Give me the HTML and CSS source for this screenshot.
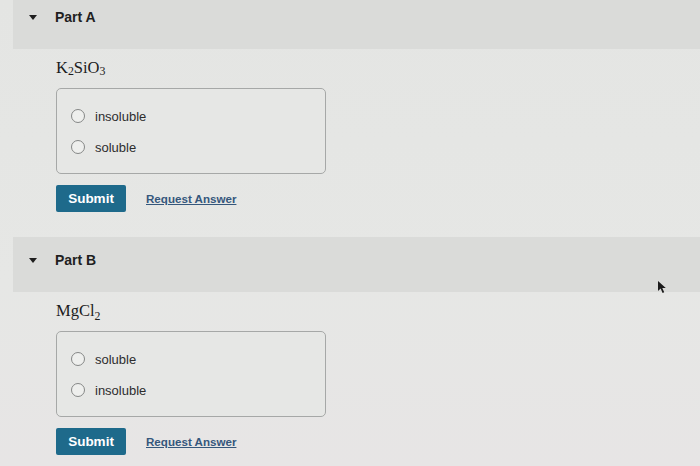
FILE: index.html
```html
<!DOCTYPE html>
<html>
<head>
    <title>Solubility Parts</title>
    <link rel="stylesheet" href="styles.css">
</head>
<body>
    <div class="parts">
        <section class="part">
            <div class="part-head">
                <span class="caret"></span>
                <span class="part-title">Part A</span>
            </div>
            <div class="part-body">
                <div class="formula">K<sub>2</sub>SiO<sub>3</sub></div>
                <div class="choices">
                    <label class="choice"><span class="radio"></span>insoluble</label>
                    <label class="choice"><span class="radio"></span>soluble</label>
                </div>
                <div class="actions">
                    <button class="submit">Submit</button>
                    <a href="#" class="request">Request Answer</a>
                </div>
            </div>
        </section>

        <section class="part">
            <div class="part-head">
                <span class="caret"></span>
                <span class="part-title">Part B</span>
            </div>
            <div class="part-body">
                <div class="formula">MgCl<sub class="low">2</sub></div>
                <div class="choices">
                    <label class="choice"><span class="radio"></span>soluble</label>
                    <label class="choice"><span class="radio"></span>insoluble</label>
                </div>
                <div class="actions">
                    <button class="submit">Submit</button>
                    <a href="#" class="request">Request Answer</a>
                </div>
            </div>
        </section>
    </div>

    <!-- mouse pointer resting on the page -->
    <svg class="pointer" width="10" height="14" viewBox="0 0 10 14">
        <path d="M1 1 L1 11 L3.6 8.6 L5.6 13 L7.2 12.3 L5.3 8 L8.8 8 Z" fill="#1b1b1b"/>
    </svg>
</body>
</html>
```

FILE: styles.css
```css
html, body {
    margin: 0;
    height: 100%;
    overflow: hidden;
}
body {
    background: linear-gradient(180deg, #e4e5e3 0%, #e6e7e5 60%, #e7e5e5 100%);
    font-family: "Liberation Sans", Arial, sans-serif;
    color: #222;
    position: relative;
}
.parts {
    margin-top: -6px;
}
.part-head {
    margin-left: 13px;
    height: 55px;
    padding: 0 0 9px 16px;
    box-sizing: border-box;
    display: flex;
    align-items: center;
    background: #dadbd9;
}
.caret {
    width: 0;
    height: 0;
    border-left: 4.5px solid transparent;
    border-right: 4.5px solid transparent;
    border-top: 5px solid #1e1e1e;
    margin-right: 18px;
}
.part-title {
    font-size: 14px;
    font-weight: bold;
    color: #1f1f1f;
}
.part-body {
    padding: 7px 0 25px 56px;
}
.formula {
    font-family: "Liberation Serif", "Times New Roman", serif;
    font-size: 16.5px;
    line-height: 24px;
    color: #1c1c1c;
}
.formula sub {
    font-size: 72%;
    vertical-align: -0.2em;
    line-height: 0;
}
.formula sub.low {
    vertical-align: -0.32em;
}
.choices {
    margin-top: 8px;
    width: 270px;
    box-sizing: border-box;
    border: 1px solid #a6a8a7;
    border-radius: 5px;
    padding: 17px 14px 16px;
    display: flex;
    flex-direction: column;
    gap: 11px;
    background: #e6e7e5;
}
.choice {
    display: flex;
    align-items: center;
    height: 20px;
    font-size: 13px;
    color: #2d2d2d;
}
.radio {
    width: 14px;
    height: 14px;
    box-sizing: border-box;
    border: 1px solid #858786;
    border-radius: 50%;
    background: #eeefed;
    margin-right: 10px;
}
.actions {
    margin-top: 11px;
    display: flex;
    align-items: center;
    gap: 20px;
}
.submit {
    width: 70px;
    height: 27px;
    border: none;
    border-radius: 2px;
    background: #1e6a8b;
    color: #fff;
    font-family: "Liberation Sans", Arial, sans-serif;
    font-size: 13.5px;
    font-weight: bold;
    padding: 0;
    cursor: pointer;
}
.request {
    font-size: 11.6px;
    font-weight: bold;
    color: #35577c;
    text-decoration: underline;
}
.pointer {
    position: absolute;
    left: 657px;
    top: 280px;
}
```
